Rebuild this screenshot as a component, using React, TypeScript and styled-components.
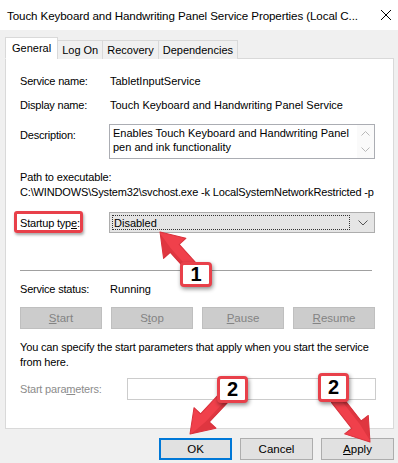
import React from "react";
import styled, {createGlobalStyle} from "styled-components";

const GlobalStyle = createGlobalStyle`
  html, body {
    margin: 0;
    padding: 0;
  }
  body {
    width: 398px;
    height: 463px;
    overflow: hidden;
    background: #f0f0f0;
    font-family: "Liberation Sans", Arial, sans-serif;
    font-size: 11px;
    color: #000;
  }
`

const Window = styled.div`
  position: relative;
  width: 398px;
  height: 463px;
  background: #f0f0f0;
  overflow: hidden;
`

const TitleBar = styled.div`
  height: 30px;
  background: #fff;
  display: flex;
  align-items: center;
  justify-content: space-between;
  padding: 0 6px 0 7px;
  font-size: 11.6px;
  letter-spacing: -0.1px;
  white-space: nowrap;
`

const Body = styled.div`
  padding: 7px 4px 0 5px;
`

const Tabs = styled.div`
  display: flex;
  align-items: flex-end;
  height: 22px;
  margin-bottom: -1px;
  position: relative;
  z-index: 1;
`

const Tab = styled.div<{ $active?: boolean }>`
  box-sizing: border-box;
  height: ${p => p.$active ? 22 : 19}px;
  padding: ${p => p.$active ? '3px 6px 0' : '2px 4px 0'};
  margin-left: ${p => p.$active ? 0 : -1}px;
  border: 1px solid #d9d9d9;
  border-bottom: ${p => p.$active ? '1px solid #fff' : 'none'};
  background: ${p => p.$active ? '#fff' : '#f0f0f0'};
  font-size: 11px;
  line-height: 14px;
`

const Panel = styled.div`
  box-sizing: border-box;
  height: 371px;
  background: #fff;
  border: 1px solid #d9d9d9;
  padding: 14px 18px 0 14px;
`

const Row = styled.div<{ $gap?: number }>`
  display: grid;
  grid-template-columns: 90px 1fr;
  align-items: center;
  line-height: 16px;
  margin-top: ${p => p.$gap ?? 0}px;
`

const Label = styled.div<{ $disabled?: boolean }>`
  color: ${p => p.$disabled ? '#8c8c8c' : '#000'};
  white-space: nowrap;
  letter-spacing: -0.2px;
`

const DescRow = styled(Row)`
  align-items: start;
`

const DescBox = styled.div`
  display: flex;
  height: 35px;
  margin-left: -1px;
  border: 1px solid #abadb3;
  box-sizing: border-box;
  line-height: 14px;
`

const DescText = styled.div`
  flex: 1;
  padding: 1px 0 0 3px;
`

const ScrollBar = styled.div`
  width: 17px;
  display: flex;
  flex-direction: column;
  align-items: center;
  justify-content: space-around;
  background: #fafafa;
`

const Block = styled.div<{ $gap?: number }>`
  margin-top: ${p => p.$gap ?? 0}px;
  line-height: 15px;
  white-space: nowrap;
  letter-spacing: -0.15px;
`

const PathValue = styled.div`
  overflow: hidden;
  width: 356px;
`

const Select = styled.div`
  box-sizing: border-box;
  height: 21px;
  margin-left: -1px;
  border: 1px solid #adadad;
  background: #e5e5e5;
  display: flex;
  align-items: center;
  padding: 0 2px;
`

const FocusText = styled.div`
  flex: 1;
  height: 15px;
  line-height: 14px;
  border: 1px dotted #333;
  box-sizing: border-box;
  padding-left: 1px;
  margin-right: 8px;
`

const Separator = styled.div`
  height: 1px;
  background: #a0a0a0;
  margin: 37px 0 0 0;
  width: 352px;
`

const ButtonGrid = styled.div`
  display: grid;
  grid-template-columns: repeat(4, 82px);
  column-gap: 9px;
  margin-top: 10px;
`

const Button = styled.div<{ $disabled?: boolean; $default?: boolean }>`
  box-sizing: border-box;
  height: 22px;
  display: flex;
  align-items: center;
  justify-content: center;
  background: ${p => p.$disabled ? '#cccccc' : '#e1e1e1'};
  color: ${p => p.$disabled ? '#838383' : '#000'};
  border: ${p => p.$default ? '2px solid #0078d7' : `1px solid ${p.$disabled ? '#bfbfbf' : '#adadad'}`};
  font-size: 11.5px;
`

const ParamRow = styled.div`
  display: grid;
  grid-template-columns: 107px 1fr;
  align-items: center;
  margin-top: 8px;
`

const TextBox = styled.div`
  height: 22px;
  box-sizing: border-box;
  border: 1px solid #cccccc;
  margin-right: -1px;
`

const Footer = styled.div`
  display: flex;
  justify-content: flex-end;
  gap: 8px;
  padding-top: 9px;
`

const FooterButton = styled(Button)`
  width: 73px;
`

const Overlay = styled.svg`
  position: absolute;
  left: 0;
  top: 0;
  pointer-events: none;
`

const Highlight = styled.div`
  position: absolute;
  left: 14px;
  top: 211px;
  width: 69px;
  height: 22px;
  box-sizing: border-box;
  border: 3px solid #e8404a;
  border-radius: 3px;
  box-shadow: 1px 2px 3px rgba(0, 0, 0, 0.35);
`

const Badge = styled.div<{ $x: number; $y: number; $w: number; $h: number }>`
  position: absolute;
  left: ${p => p.$x}px;
  top: ${p => p.$y}px;
  width: ${p => p.$w}px;
  height: ${p => p.$h}px;
  box-sizing: border-box;
  border: 3px solid #e8404a;
  border-radius: 4px;
  background: #fff;
  box-shadow: 1px 2px 4px rgba(0, 0, 0, 0.45);
  display: flex;
  align-items: center;
  justify-content: center;
  font-family: "Liberation Sans", Arial, sans-serif;
  font-weight: bold;
  font-size: 20px;
`

function Chevron({up}: { up?: boolean }) {
    return <svg width="9" height="5" viewBox="0 0 9 5">
        <polyline points={up ? "0.5,4.5 4.5,0.5 8.5,4.5" : "0.5,0.5 4.5,4.5 8.5,0.5"}
                  fill="none" stroke="#b8b8b8" strokeWidth="1"/>
    </svg>
}

// red annotation arrow, tip at (x,y), pointing back along angle
function Arrow({x, y, angle, length}: { x: number, y: number, angle: number, length: number }) {
    const pts = `0,0 22,-15 22,-6 ${length},-6 ${length},6 22,6 22,15`
    return <g transform={`translate(${x} ${y}) rotate(${angle})`}>
        <polygon points={pts} fill="#f0404b" stroke="#d9303b" strokeWidth="1" strokeLinejoin="round"/>
        <polygon points={`2,1 22,14 22,6 ${length},6 ${length},3 20,3`} fill="#c92a34" opacity="0.45"/>
    </g>
}

export default function App() {
    return (
        <Window>
            <GlobalStyle/>
            <TitleBar>
                <span>Touch Keyboard and Handwriting Panel Service Properties (Local C...</span>
                <svg width="12" height="12" viewBox="0 0 12 12">
                    <path d="M1 1 L11 11 M11 1 L1 11" stroke="#000" strokeWidth="1"/>
                </svg>
            </TitleBar>
            <Body>
                <Tabs>
                    <Tab $active>General</Tab>
                    <Tab>Log On</Tab>
                    <Tab>Recovery</Tab>
                    <Tab>Dependencies</Tab>
                </Tabs>
                <Panel>
                    <Row>
                        <Label>Service name:</Label>
                        <div>TabletInputService</div>
                    </Row>
                    <Row $gap={8}>
                        <Label>Display name:</Label>
                        <div>Touch Keyboard and Handwriting Panel Service</div>
                    </Row>
                    <DescRow $gap={11}>
                        <Label style={{paddingTop: 3}}>Description:</Label>
                        <DescBox>
                            <DescText>Enables Touch Keyboard and Handwriting Panel<br/>pen and ink functionality</DescText>
                            <ScrollBar><Chevron up/><Chevron/></ScrollBar>
                        </DescBox>
                    </DescRow>
                    <Block $gap={11}>
                        <div>Path to executable:</div>
                        <PathValue>C:\WINDOWS\System32\svchost.exe -k LocalSystemNetworkRestricted -p</PathValue>
                    </Block>
                    <Row $gap={12}>
                        <Label>Startup typ<u>e</u>:</Label>
                        <Select>
                            <FocusText>Disabled</FocusText>
                            <svg width="10" height="6" viewBox="0 0 10 6">
                                <polyline points="0.5,0.5 5,5 9.5,0.5" fill="none" stroke="#555" strokeWidth="1"/>
                            </svg>
                            <span style={{width: 4}}/>
                        </Select>
                    </Row>
                    <Separator/>
                    <Row $gap={10}>
                        <Label>Service status:</Label>
                        <div>Running</div>
                    </Row>
                    <ButtonGrid>
                        <Button $disabled><u>S</u>tart</Button>
                        <Button $disabled>S<u>t</u>op</Button>
                        <Button $disabled><u>P</u>ause</Button>
                        <Button $disabled><u>R</u>esume</Button>
                    </ButtonGrid>
                    <Block $gap={11}>
                        You can specify the start parameters that apply when you start the service<br/>from here.
                    </Block>
                    <ParamRow>
                        <Label $disabled>Start para<u>m</u>eters:</Label>
                        <TextBox/>
                    </ParamRow>
                </Panel>
                <Footer>
                    <FooterButton $default>OK</FooterButton>
                    <FooterButton>Cancel</FooterButton>
                    <FooterButton><u>A</u>pply</FooterButton>
                </Footer>
            </Body>

            <Highlight/>
            <Overlay width="398" height="463" viewBox="0 0 398 463">
                <Arrow x={160} y={232} angle={48} length={48}/>
                <Arrow x={190} y={434} angle={-47} length={52}/>
                <Arrow x={370} y={442} angle={-128} length={55}/>
            </Overlay>
            <Badge $x={180} $y={262} $w={32} $h={25}>1</Badge>
            <Badge $x={217} $y={376} $w={31} $h={27}>2</Badge>
            <Badge $x={318} $y={373} $w={31} $h={29}>2</Badge>
        </Window>
    );
}
